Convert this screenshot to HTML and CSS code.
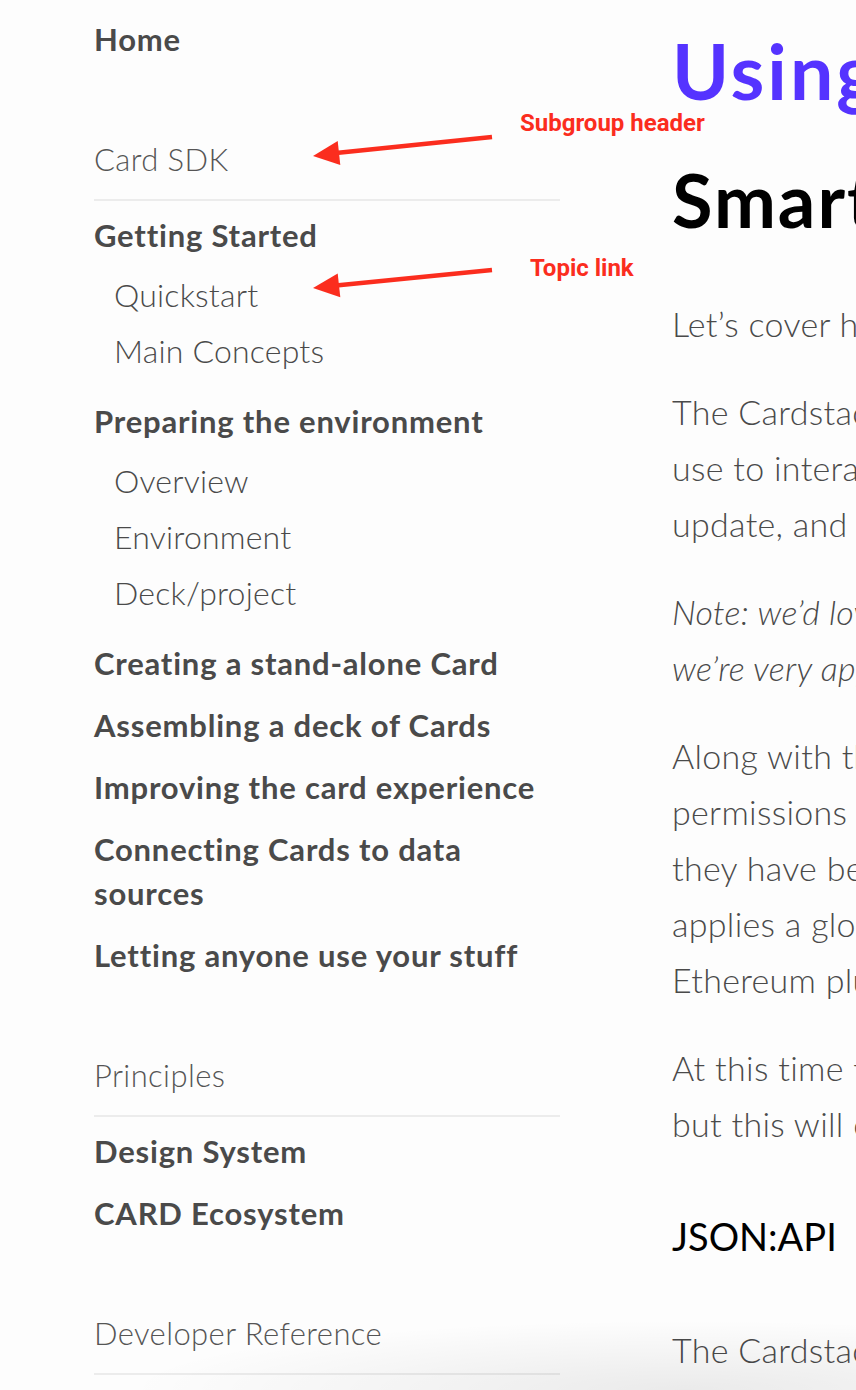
FILE: index.html
```html
<!DOCTYPE html>
<html lang="en">
<head>
<meta charset="utf-8">
<title>Smart Contracts – Cardstack Docs</title>
<link rel="stylesheet" href="styles.css">
</head>
<body>
<div class="page">
  <nav class="sidebar">
    <a class="topic" href="#">Home</a>

    <section class="section">
      <h4 class="section-title">Card SDK</h4>
      <div class="topics">
        <div class="topic-group">
          <a class="topic" href="#">Getting Started</a>
          <div class="links">
            <a class="link" href="#">Quickstart</a>
            <a class="link" href="#">Main Concepts</a>
          </div>
        </div>
        <div class="topic-group">
          <a class="topic" href="#">Preparing the environment</a>
          <div class="links">
            <a class="link" href="#">Overview</a>
            <a class="link" href="#">Environment</a>
            <a class="link" href="#">Deck/project</a>
          </div>
        </div>
        <a class="topic" href="#">Creating a stand-alone Card</a>
        <a class="topic" href="#">Assembling a deck of Cards</a>
        <a class="topic" href="#">Improving the card experience</a>
        <a class="topic" href="#">Connecting Cards to data sources</a>
        <a class="topic" href="#">Letting anyone use your stuff</a>
      </div>
    </section>

    <section class="section">
      <h4 class="section-title">Principles</h4>
      <div class="topics">
        <a class="topic" href="#">Design System</a>
        <a class="topic" href="#">CARD Ecosystem</a>
      </div>
    </section>

    <section class="section">
      <h4 class="section-title">Developer Reference</h4>
    </section>
  </nav>

  <main class="content">
    <div class="kicker">Using Cardstack</div>
    <h1 class="title">Smart Contracts</h1>
    <p>Let’s cover how to use smart contracts with Cardstack.</p>
    <p>The Cardstack SDK provides a set of tools that developers can<br>use to interact with smart contracts, so they can read, create,<br>update, and display data stored on the blockchain.</p>
    <p class="note">Note: we’d love to support more blockchains in the future, and<br>we’re very approachable if you want to help us get there.</p>
    <p>Along with the ability to read data, the Hub manages<br>permissions for each user, so that a user can only see what<br>they have been granted access to. Currently, the Hub<br>applies a global read permission to all data from the<br>Ethereum plugin.</p>
    <p>At this time the Ethereum plugin only supports reading data,<br>but this will change in the future.</p>
    <h3 class="subhead">JSON:API</h3>
    <p>The Cardstack Hub exposes contract data as JSON:API resources.</p>
  </main>

  <svg class="arrows" width="856" height="320" viewBox="0 0 856 320" aria-hidden="true">
    <line x1="492" y1="137" x2="336" y2="153" />
    <polygon points="313,156 337.7,141 340.3,165" />
    <line x1="492" y1="270" x2="336" y2="285.5" />
    <polygon points="313,288 337.7,273.4 340.3,297.2" />
  </svg>
  <span class="note-label label-subgroup">Subgroup header</span>
  <span class="note-label label-topic">Topic link</span>

  <div class="bottom-shade"></div>
</div>
</body>
</html>
```

FILE: styles.css
```css
html, body {
  margin: 0;
  padding: 0;
}

body {
  background: #fdfdfd;
  font-family: Lato, "Open Sans", sans-serif;
  color: #4a4a4a;
  height: 1390px;
  overflow: hidden;
}

a {
  color: inherit;
  text-decoration: none;
}

.page {
  position: relative;
  display: flex;
  align-items: flex-start;
  width: 1800px;
  height: 1390px;
  padding-left: 94px;
  box-sizing: border-box;
}

/* Sidebar */
.sidebar {
  flex: none;
  width: 466px;
  padding-top: 17px;
  display: flex;
  flex-direction: column;
  gap: 18px;
}

.topic {
  display: block;
  font-weight: 700;
  font-size: 31px;
  letter-spacing: 0.8px;
  line-height: 44px;
  color: #4a4a4a;
}

.section {
  margin-top: 60px;
}

.section-title {
  margin: 0 0 12px;
  padding-bottom: 20px;
  border-bottom: 2px solid #ececec;
  font-weight: 300;
  font-size: 31px;
  letter-spacing: 0.4px;
  line-height: 40px;
  color: #555;
}

.topics {
  display: flex;
  flex-direction: column;
  gap: 18px;
}

.links {
  display: flex;
  flex-direction: column;
  padding: 10px 0 2px 20px;
}

.link {
  font-weight: 300;
  font-size: 32px;
  letter-spacing: 0.2px;
  line-height: 56px;
  color: #4a4a4a;
}

/* Main content */
.content {
  flex: none;
  margin-left: 112px;
  padding-top: 27px;
  color: #4a4a4a;
}

.kicker {
  font-weight: 700;
  font-size: 77px;
  letter-spacing: 3px;
  line-height: 86px;
  color: #5533ff;
  white-space: nowrap;
}

.title {
  margin: 44px 0 0;
  font-weight: 700;
  font-size: 74px;
  letter-spacing: 2px;
  line-height: 86px;
  color: #000;
  white-space: nowrap;
}

.content p {
  margin: 53px 0 0;
  font-weight: 300;
  font-size: 34px;
  letter-spacing: 0.3px;
  line-height: 56px;
  white-space: nowrap;
}

.content p + p {
  margin-top: 32px;
}

.content p.note {
  font-style: italic;
}

.subhead {
  margin: 56px 0 0;
  font-weight: 400;
  font-size: 38px;
  line-height: 56px;
  color: #000;
}

.content .subhead + p {
  margin-top: 58px;
}

/* Annotations */
.arrows {
  position: absolute;
  left: 0;
  top: 0;
}

.arrows line {
  stroke: #fb2d1e;
  stroke-width: 4.5;
}

.arrows polygon {
  fill: #fb2d1e;
}

.note-label {
  position: absolute;
  font-family: Roboto, "Liberation Sans", sans-serif;
  font-weight: 700;
  font-size: 24px;
  line-height: 28px;
  color: #fb2d1e;
  white-space: nowrap;
}

.label-subgroup {
  left: 520px;
  top: 109px;
}

.label-topic {
  left: 530px;
  top: 254px;
}

.bottom-shade {
  position: absolute;
  left: 0;
  bottom: 0;
  width: 856px;
  height: 70px;
  background: radial-gradient(ellipse 65% 100% at 80% 100%, rgba(0, 0, 0, 0.075), rgba(0, 0, 0, 0) 100%);
  pointer-events: none;
}
```
